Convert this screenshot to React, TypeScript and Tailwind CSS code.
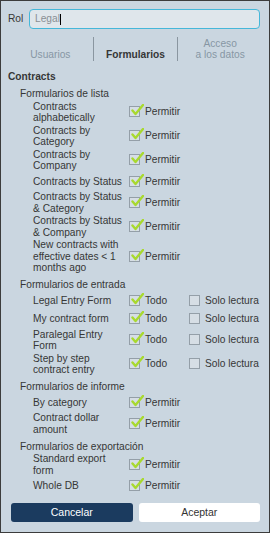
import React from 'react';

type Row = { label: string };

const lista: Row[] = [
  { label: 'Contracts alphabetically' },
  { label: 'Contracts by Category' },
  { label: 'Contracts by Company' },
  { label: 'Contracts by Status' },
  { label: 'Contracts by Status & Category' },
  { label: 'Contracts by Status & Company' },
  { label: 'New contracts with effective dates < 1 months ago' },
];

const entrada = ['Legal Entry Form', 'My contract form', 'Paralegal Entry Form', 'Step by step contract entry'];
const informe = ['By category', 'Contract dollar amount'];
const exportacion = ['Standard export form', 'Whole DB'];

function Check({ checked, label }: { checked: boolean; label: string }) {
  return (
    <div className="flex items-center">
      <div className="relative w-[11px] h-[11px] border border-[#949fa8] bg-[#d6dee5] shrink-0">
        {checked && (
          <svg className="absolute left-[1px] top-[-3px]" width="13" height="12" viewBox="0 0 13 12">
            <polyline points="1.5,6.5 4.5,10 12,1" fill="none" stroke="#a8d92e" strokeWidth="2.4" strokeLinecap="round" strokeLinejoin="round" />
          </svg>
        )}
      </div>
      <span className="ml-[5px]">{label}</span>
    </div>
  );
}

function Item({ label, children }: { label: string; children: React.ReactNode }) {
  return (
    <div className="flex items-center min-h-[18.5px] pl-[25px]">
      <div className="w-[96px] pr-[3px] py-[0.5px] leading-[11.5px]">{label}</div>
      {children}
    </div>
  );
}

function Group({ title, children }: { title: string; children: React.ReactNode }) {
  return (
    <div className="mt-[5px]">
      <div className="pl-[12px] leading-[12px]">{title}</div>
      {children}
    </div>
  );
}

export default function App() {
  return (
    <div
      className="w-[270px] h-[533px] border border-[#3c3c3c] bg-[#cad6e0] flex flex-col text-[10.2px] text-[#363636]"
      style={{ fontFamily: '"Liberation Sans", Arial, sans-serif' }}
    >
      {/* Rol */}
      <div className="flex items-center pl-[7px] pr-[9px] pt-[8px]">
        <span className="w-[21px]">Rol</span>
        <div className="flex-1 h-[20px] rounded-[4px] border-[1.5px] border-[#45b7d9] bg-[#dfe6eb] flex items-center pl-[5px]">
          <span className="text-[#8a8f94]">Legal</span>
          <span className="w-[1px] h-[11px] bg-black" />
        </div>
      </div>

      {/* Tabs */}
      <div className="flex h-[24px] mt-[8px] mx-[7px] leading-[11.7px] text-center">
        <div className="w-[85px] flex items-end justify-center text-[#8796a4]">Usuarios</div>
        <div className="w-[85px] flex items-end justify-center border-l border-[#8a96a0] font-bold">Formularios</div>
        <div className="w-[85px] flex items-end justify-center border-l border-[#8a96a0] text-[#8796a4]">
          Acceso<br />a los datos
        </div>
      </div>

      <div className="px-[7px] mt-[10px]">
        <div className="font-bold leading-[12px]">Contracts</div>

        <Group title="Formularios de lista">
          {lista.map(r => (
            <Item key={r.label} label={r.label}>
              <Check checked label="Permitir" />
            </Item>
          ))}
        </Group>

        <Group title="Formularios de entrada">
          {entrada.map(l => (
            <Item key={l} label={l}>
              <div className="w-[60px]">
                <Check checked label="Todo" />
              </div>
              <Check checked={false} label="Solo lectura" />
            </Item>
          ))}
        </Group>

        <Group title="Formularios de informe">
          {informe.map(l => (
            <Item key={l} label={l}>
              <Check checked label="Permitir" />
            </Item>
          ))}
        </Group>

        <Group title="Formularios de exportación">
          {exportacion.map(l => (
            <Item key={l} label={l}>
              <Check checked label="Permitir" />
            </Item>
          ))}
        </Group>
      </div>

      {/* Footer */}
      <div className="mt-auto flex gap-[6px] pl-[10px] pr-[9px] pb-[10px]">
        <button className="flex-1 h-[19px] rounded-[3px] bg-[#1b3b5f] text-white text-[10.5px]">Cancelar</button>
        <button className="flex-1 h-[19px] rounded-[3px] bg-white text-[#333333] text-[10.5px]">Aceptar</button>
      </div>
    </div>
  );
}
